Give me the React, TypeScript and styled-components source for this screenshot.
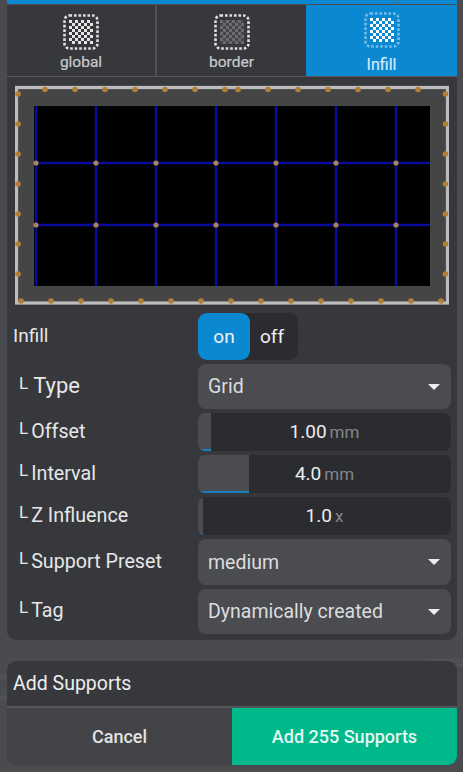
import * as React from "react";
import styled, { createGlobalStyle } from "styled-components";

const GlobalStyle = createGlobalStyle`
  html, body {
    margin: 0;
    padding: 0;
    background: #4a4b4f;
  }
  * {
    box-sizing: border-box;
  }
`;

const Page = styled.div`
  width: 463px;
  height: 772px;
  overflow: hidden;
  padding: 0 6px 0 7px;
  font-family: "Roboto", sans-serif;
  background:
    linear-gradient(176deg, transparent 86.4%, rgba(255, 255, 255, 0.05) 86.6%, transparent 87.2%),
    linear-gradient(178deg, transparent 85.4%, rgba(255, 255, 255, 0.04) 85.8%, transparent 86.4%),
    #4a4b4f;
`;

const Panel = styled.div`
  background: #37383c;
  border-radius: 0 0 9px 9px;
  height: 640px;
`;

const TopBar = styled.div`
  display: flex;
  height: 5px;
  border-bottom: 1px solid #4f5054;
`;

const TopSegment = styled.div<{ $width: number }>`
  width: ${props => props.$width}px;
  background: #0a88d2;
  & + & {
    border-left: 1px solid #3d6f92;
  }
`;

const Tabs = styled.div`
  display: grid;
  grid-template-columns: 150px 149px 151px;
  height: 72px;
  border-bottom: 1px solid #55565a;
`;

const Tab = styled.div<{ $active?: boolean }>`
  display: flex;
  flex-direction: column;
  align-items: center;
  padding-top: ${props => (props.$active ? 7 : 9)}px;
  background: ${props => (props.$active ? "#0a88d2" : "#37383c")};
  color: ${props => (props.$active ? "#d4ecfa" : "#c9cbce")};
  border-right: ${props => (props.$active ? "none" : "2px solid #505155")};
  font-size: ${props => (props.$active ? 16 : 15.5)}px;
  font-weight: 400;
  line-height: 19px;
  -webkit-text-stroke: 0.2px currentColor;

  &:nth-child(2) {
    border-right: none;
  }
`;

const TabLabel = styled.span<{ $active?: boolean }>`
  margin-top: ${props => (props.$active ? 7 : 3)}px;
`;

const Preview = styled.svg`
  display: block;
  margin: 8px 0 8px 8px;
`;

const Rows = styled.div`
  display: flex;
  flex-direction: column;
  gap: 4px;
  padding: 0 6px;
`;

const Row = styled.div`
  display: grid;
  grid-template-columns: 185px 253px;
`;

const Label = styled.div<{ $size?: number; $top?: number }>`
  display: flex;
  align-items: baseline;
  padding-top: ${props => props.$top ?? 0}px;
  color: #e6e7e8;
  font-size: ${props => props.$size ?? 19.7}px;
  line-height: 24px;
`;

const Tick = styled.span<{ $gap?: number }>`
  font-size: 17px;
  margin: 0 ${props => props.$gap ?? 3}px 0 6px;
  position: relative;
  top: -4px;
`;

const Toggle = styled.div`
  display: flex;
  width: 100px;
  height: 47px;
  border-radius: 9px;
  background: #2b2c30;
`;

const ToggleOption = styled.div<{ $on?: boolean }>`
  display: flex;
  align-items: center;
  justify-content: center;
  width: ${props => (props.$on ? 52 : 44)}px;
  border-radius: 9px;
  background: ${props => (props.$on ? "#0a88d2" : "transparent")};
  color: #eef0f1;
  font-size: 19px;
`;

const Select = styled.div<{ $height?: number }>`
  display: flex;
  align-items: center;
  justify-content: space-between;
  height: ${props => props.$height ?? 45}px;
  padding: 0 11px 0 10px;
  border-radius: 8px;
  background: #4b4c50;
  color: #dcdddf;
  font-size: 19.5px;
`;

const Caret = styled.span`
  width: 0;
  height: 0;
  border-left: 6px solid transparent;
  border-right: 6px solid transparent;
  border-top: 6px solid #eceded;
`;

const Slider = styled.div`
  position: relative;
  display: flex;
  align-items: baseline;
  justify-content: center;
  gap: 3px;
  height: 38px;
  line-height: 38px;
  border-radius: 7px;
  overflow: hidden;
  background: #2b2c30;
  color: #eceded;
  font-size: 19px;
`;

const SliderFill = styled.div`
  position: absolute;
  left: 0;
  top: 0;
  bottom: 0;
  background: #4b4c50;

  &::after {
    content: "";
    position: absolute;
    left: 2px;
    right: 0;
    bottom: 0;
    height: 2px;
    background: #1a7fc0;
  }
`;

const SliderValue = styled.span`
  position: relative;
`;

const Unit = styled.span`
  position: relative;
  color: #85868a;
  font-size: 17px;
`;

const Footer = styled.div`
  margin-top: 21px;
  height: 104px;
  border-radius: 9px;
  overflow: hidden;
  background: #37383c;
`;

const FooterTitle = styled.div`
  height: 47px;
  padding: 0 6px;
  border-bottom: 2px solid #55565a;
  color: #eceded;
  font-size: 19.5px;
  line-height: 46px;
`;

const FooterButtons = styled.div`
  display: grid;
  grid-template-columns: 225px 225px;
  height: 57px;
`;

const FooterButton = styled.div<{ $primary?: boolean }>`
  display: flex;
  align-items: center;
  justify-content: center;
  background: ${props => (props.$primary ? "#00b98b" : "#434448")};
  color: ${props => (props.$primary ? "#e3f8f1" : "#e2e3e4")};
  font-size: 18px;
  font-weight: 500;
`;

const ICON_CELLS: number[] = [];
for (let i = 0; i < 8; i++) ICON_CELLS.push(i);

function InfillIcon(props: { border: string; fill: string; gap: string }) {
  return (
    <svg width="36" height="36" viewBox="0 0 36 36">
      <rect
        x="1.5"
        y="1.5"
        width="33"
        height="33"
        rx="5"
        fill="none"
        stroke={props.border}
        strokeWidth="2.6"
        strokeDasharray="2.6 1.9"
      />
      <rect x="6" y="6" width="24" height="24" fill={props.gap} />
      {ICON_CELLS.map(r =>
        ICON_CELLS.map(c =>
          (r + c) % 2 === 0 ? (
            <rect key={r + "-" + c} x={6 + c * 3} y={6 + r * 3} width="3" height="3" fill={props.fill} />
          ) : null
        )
      )}
    </svg>
  );
}

const GRID_X = [36, 96, 156, 216, 276, 336, 396];
const GRID_Y = [163, 225];
const TOP_DOTS = [45, 75, 105, 135, 165, 195, 225, 238, 268, 298, 328, 358, 388, 418];
const BOTTOM_DOTS = [21, 51, 81, 111, 141, 171, 201, 231, 261, 291, 321, 351, 381, 411, 441];
const SIDE_DOTS = [94, 124, 154, 184, 214, 244, 274];

function InfillPreview() {
  const dot = "#b08036";
  return (
    <Preview width="434" height="220" viewBox="15 85 434 220">
      <rect x="15" y="85" width="434" height="220" fill="#3d3e41" />
      <rect x="16.5" y="87.5" width="431" height="215.5" fill="#454545" stroke="#bcbcbc" strokeWidth="3.2" />
      <rect x="34" y="106" width="396" height="180" fill="#000" />
      {GRID_X.map(x => (
        <line key={x} x1={x} x2={x} y1="106" y2="286" stroke="#0a0a9c" strokeWidth="2.4" />
      ))}
      {GRID_Y.map(y => (
        <line key={y} x1="34" x2="430" y1={y} y2={y} stroke="#0a0a9c" strokeWidth="2.4" />
      ))}
      {GRID_Y.map(y =>
        GRID_X.map(x => <circle key={x + "-" + y} cx={x} cy={y} r="2.6" fill="#a9825a" />)
      )}
      {TOP_DOTS.map(x => (
        <circle key={x} cx={x} cy="89.5" r="2.8" fill={dot} />
      ))}
      {BOTTOM_DOTS.map(x => (
        <circle key={x} cx={x} cy="301" r="2.8" fill={dot} />
      ))}
      {SIDE_DOTS.map(y => (
        <React.Fragment key={y}>
          <circle cx="18" cy={y} r="2.8" fill={dot} />
          <circle cx="445.5" cy={y} r="2.8" fill={dot} />
        </React.Fragment>
      ))}
    </Preview>
  );
}

function Indented(props: { text: string; size?: number; top?: number; gap?: number }) {
  return (
    <Label $size={props.size} $top={props.top}>
      <Tick $gap={props.gap}>L</Tick>
      {props.text}
    </Label>
  );
}

function SliderControl(props: { value: string; unit: string; fill: number }) {
  return (
    <Slider>
      <SliderFill style={{ width: props.fill }} />
      <SliderValue>{props.value}</SliderValue>
      <Unit>{props.unit}</Unit>
    </Slider>
  );
}

export default function App() {
  return (
    <Page>
      <GlobalStyle />
      <Panel>
        <TopBar>
          <TopSegment $width={389} />
          <TopSegment $width={61} />
        </TopBar>
        <Tabs>
          <Tab>
            <InfillIcon border="#e0e0e0" fill="#e4e4e4" gap="#37383c" />
            <TabLabel>global</TabLabel>
          </Tab>
          <Tab>
            <InfillIcon border="#e0e0e0" fill="#6b6c6f" gap="#46474a" />
            <TabLabel>border</TabLabel>
          </Tab>
          <Tab $active>
            <InfillIcon border="#74bdea" fill="#ffffff" gap="#0a88d2" />
            <TabLabel $active>Infill</TabLabel>
          </Tab>
        </Tabs>
        <InfillPreview />
        <Rows>
          <Row>
            <Label $size={19} $top={11}>Infill</Label>
            <Toggle>
              <ToggleOption $on>on</ToggleOption>
              <ToggleOption>off</ToggleOption>
            </Toggle>
          </Row>
          <Row>
            <Indented text="Type" size={22} top={10} gap={5} />
            <Select>
              Grid
              <Caret />
            </Select>
          </Row>
          <Row>
            <Indented text="Offset" top={7} />
            <SliderControl value="1.00" unit="mm" fill={13} />
          </Row>
          <Row>
            <Indented text="Interval" top={7} />
            <SliderControl value="4.0" unit="mm" fill={51} />
          </Row>
          <Row>
            <Indented text="Z Influence" top={7} />
            <SliderControl value="1.0" unit="x" fill={5} />
          </Row>
          <Row>
            <Indented text="Support Preset" top={11} />
            <Select $height={46}>
              medium
              <Caret />
            </Select>
          </Row>
          <Row>
            <Indented text="Tag" top={10} />
            <Select>
              Dynamically created
              <Caret />
            </Select>
          </Row>
        </Rows>
      </Panel>
      <Footer>
        <FooterTitle>Add Supports</FooterTitle>
        <FooterButtons>
          <FooterButton>Cancel</FooterButton>
          <FooterButton $primary>Add 255 Supports</FooterButton>
        </FooterButtons>
      </Footer>
    </Page>
  );
}
